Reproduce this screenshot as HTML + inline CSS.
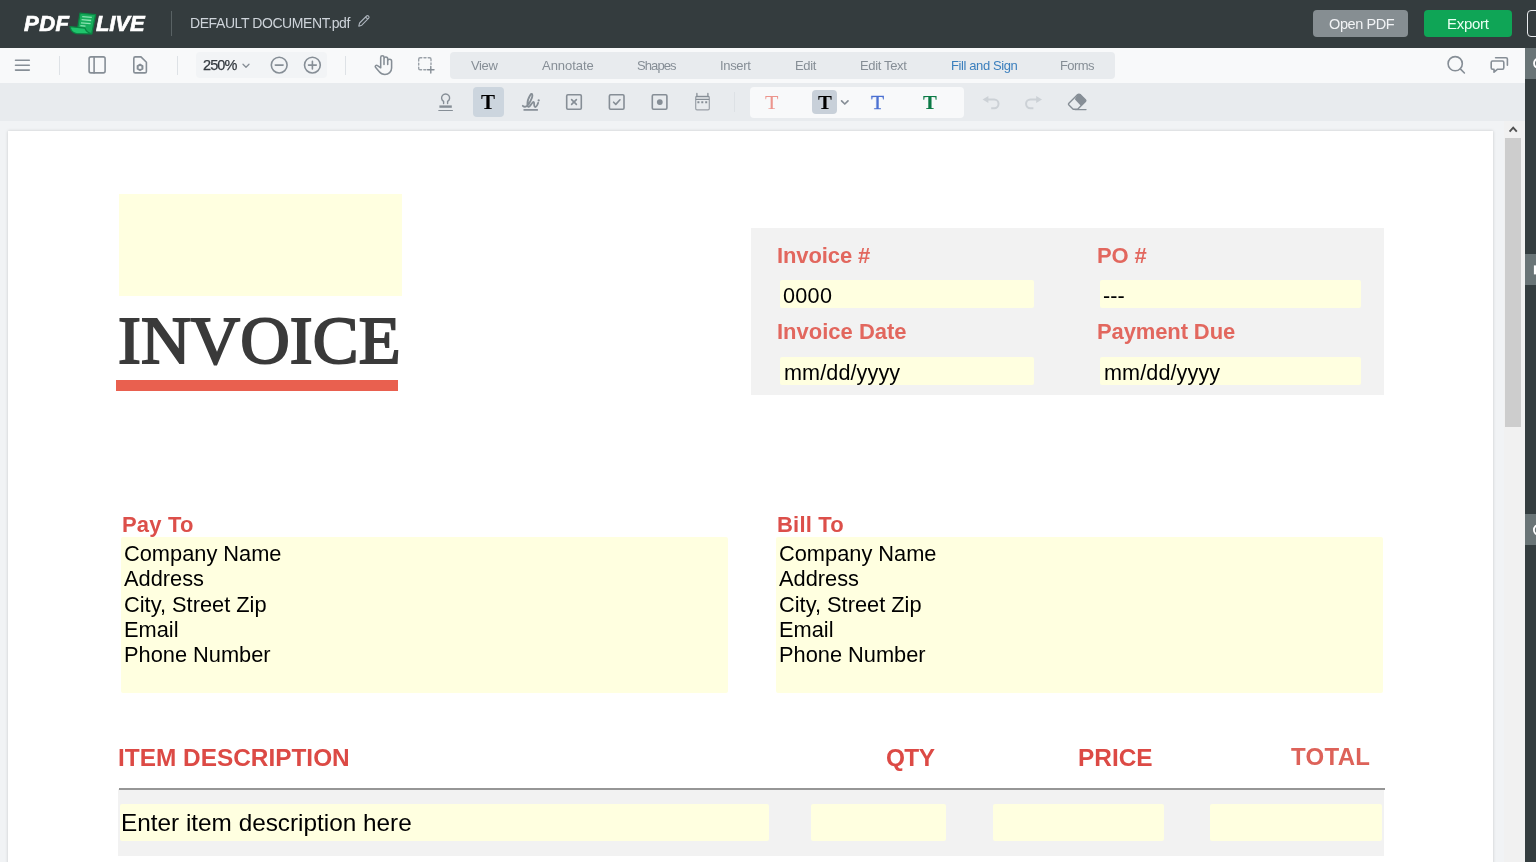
<!DOCTYPE html>
<html lang="en">
<head>
<meta charset="utf-8">
<title>PDF Live - DEFAULT DOCUMENT.pdf</title>
<style>
*{box-sizing:border-box;margin:0;padding:0}
html,body{width:1536px;height:862px;overflow:hidden;background:#f1f3f5;font-family:"Liberation Sans",sans-serif}
.abs,.t{position:absolute}
.t{white-space:nowrap;line-height:1;will-change:transform}
.ct{display:inline-block;transform-origin:0 80%}
#app{position:relative;width:1536px;height:862px;overflow:hidden}
/* header */
#hdr{left:0;top:0;width:1536px;height:48px;background:#343c3e}
#tb1{left:0;top:48px;width:1525px;height:35px;background:#f8f9fa}
#tb2{left:0;top:83px;width:1525px;height:38px;background:#e8ebee}
#side{left:1525px;top:48px;width:11px;height:814px;background:#343d3f}
.band{left:1525px;width:11px;background:#697476}
.sep{width:1px;background:#dee2e6}
svg{position:absolute;overflow:visible}
.ic{fill:none;stroke:#868e96;stroke-width:1.6;stroke-linecap:round;stroke-linejoin:round}
.tab{color:#868e96;font-size:13px;top:58.5px;letter-spacing:-0.35px}
/* document */
#page{left:8px;top:131px;width:1485px;height:740px;background:#fff;box-shadow:0 0 3px rgba(0,0,0,.17)}
.fld{background:#ffffe0;border-radius:2px}
.lbl{color:#e2574c;font-weight:bold}
.val{color:#000}
</style>
</head>
<body>
<div id="app">
<!-- SECTION:header -->
<div id="hdr" class="abs">
  <span class="t" id="lg1" style="left:24px;top:12.5px;font-size:22px;font-weight:bold;font-style:italic;color:#fff;letter-spacing:0.5px;-webkit-text-stroke:0.7px #fff">PDF</span>
  <svg id="lgi" style="left:68px;top:12px" width="30" height="24" viewBox="0 0 30 24">
    <path d="M12 1.2 L27.6 2.6 L23.8 21.6 L9 20.5 Z" fill="#17ad5c" stroke="#0b8443" stroke-width="1.3" stroke-linejoin="round"/>
    <path d="M14.2 4.6 L23.8 5.4 M13.6 7.7 L23.2 8.5 M13 10.8 L22.6 11.6 M12.4 13.7 L17.5 14.1" stroke="#8be3b1" stroke-width="1.3" fill="none"/>
    <path d="M2 14.6 L17 16.2 Q18.5 20.5 23.8 21.8 L8.5 21.6 Q3 20.6 2 14.6 Z" fill="#1fc46c" stroke="#0b8443" stroke-width="1.2" stroke-linejoin="round"/>
  </svg>
  <span class="t" id="lg2" style="left:96px;top:12.5px;font-size:22px;font-weight:bold;font-style:italic;color:#fff;letter-spacing:-0.1px;-webkit-text-stroke:0.7px #fff">LIVE</span>
  <div class="abs" style="left:171px;top:11px;width:1px;height:25px;background:#596264"></div>
  <span class="t" id="ttl" style="left:190px;top:16px;font-size:14px;color:#ced4da;letter-spacing:-0.42px">DEFAULT DOCUMENT.pdf</span>
  <svg id="pen" style="left:357px;top:14px" width="14" height="14" viewBox="0 0 14 14">
    <path d="M1.8 12.2 L2.6 9 L9.6 2 Q10.6 1.2 11.6 2.2 Q12.6 3.2 11.7 4.2 L4.8 11.2 Z M8.6 3.1 L10.7 5.2" fill="none" stroke="#adb5bd" stroke-width="1.1" stroke-linejoin="round"/>
  </svg>
  <div class="abs" style="left:1313px;top:10px;width:95px;height:27px;border-radius:4px;background:#868e92"></div>
  <span class="t" id="bopen" style="left:1328.7px;top:16.8px;font-size:14.5px;color:#f1f3f5;letter-spacing:-0.4px">Open PDF</span>
  <div class="abs" style="left:1424px;top:10px;width:88px;height:27px;border-radius:4px;background:#0fa556"></div>
  <span class="t" id="bexp" style="left:1447px;top:16px;font-size:15px;color:#eafff2;letter-spacing:-0.3px">Export</span>
  <div class="abs" style="left:1527px;top:10px;width:20px;height:27px;border-radius:4px;border:1px solid #e9ecef"></div>
</div>
<!-- SECTION:toolbar1 -->
<div id="tb1" class="abs"></div>
<div class="abs" style="left:196px;top:52px;width:131px;height:26px;border-radius:4px;background:#f2f4f6"></div>
<svg id="tb1ic" style="left:0;top:0" width="1536" height="90" viewBox="0 0 1536 90">
  <g class="ic">
    <path d="M15.5 60.3 H29.3 M15.5 65.2 H29.3 M15.5 70.1 H29.3"/>
    <rect x="89.1" y="56.9" width="16" height="16" rx="1.8"/><path d="M94.1 57 V73"/>
    <path d="M135.3 56.9 H141 L146.4 62.3 V71.4 Q146.4 72.9 144.9 72.9 H135.3 Q133.8 72.9 133.8 71.4 V58.4 Q133.8 56.9 135.3 56.9 Z"/>
    <path d="M140.05 64.65 L142.43 66.03 L142.43 68.78 L140.05 70.15 L137.67 68.78 L137.67 66.03 Z" stroke-width="2" stroke-linejoin="miter"/>
    <circle cx="279.2" cy="65.1" r="7.9"/><path d="M275.3 65.1 H283.1"/>
    <circle cx="312.4" cy="65.1" r="7.9"/><path d="M308.5 65.1 H316.3 M312.4 61.2 V69"/>
    <path d="M243 64.3 L246 67.3 L249 64.3" stroke-width="1.3"/>
    <path d="M380.7 67.8 V57.4 a1.65 1.65 0 0 1 3.3 0 V64.4 M384 58.9 a1.85 1.85 0 0 1 3.7 0 V64.4 M387.7 61.2 a1.95 1.95 0 0 1 3.9 0 V68 c0 3.9 -3 6.4 -6.7 6.4 c-2.6 0 -4.3 -1 -5.6 -2.7 l-3.8 -4.4 c-0.9 -1.3 0.8 -2.6 2 -1.6 l3.2 2.1" stroke-width="1.55"/>
    <path d="M418.7 61 V59.2 Q418.7 57.8 420.1 57.8 H421.8 M424 57.8 H426 M428.2 57.8 H429.6 Q431 57.8 431 59.2 V60.8 M431 63 V64.6 M418.7 63.2 V65 M418.7 67.3 V68.4 Q418.7 69.7 420.1 69.7 H421.6 M423.8 69.7 H425.8" stroke-width="1.4" stroke="#9aa1a8"/>
    <path d="M427.5 69.7 H434 M430.8 66.5 V73" stroke-width="1.4"/>
    <circle cx="1455.2" cy="63.7" r="7.1" stroke-width="1.6"/><path d="M1460.3 68.9 L1464.4 73" stroke-width="1.6"/>
    <path d="M1492.6 61 H1502.4 Q1503.8 61 1503.8 62.4 V67.8 Q1503.8 69.2 1502.4 69.2 H1497.6 L1494 72.2 V69.2 H1492.6 Q1491.2 69.2 1491.2 67.8 V62.4 Q1491.2 61 1492.6 61 Z"/>
    <path d="M1495.6 57.7 H1506 Q1507.4 57.7 1507.4 59.1 V65.2"/>
  </g>
</svg>
<div class="abs sep" style="left:59.2px;top:56px;height:19px"></div>
<div class="abs sep" style="left:177px;top:56px;height:19px"></div>
<div class="abs sep" style="left:344.8px;top:56px;height:19px"></div>
<span class="t" id="zoomv" style="left:203px;top:58px;font-size:14.5px;color:#343a40;letter-spacing:-0.9px;-webkit-text-stroke:0.25px #343a40">250%</span>
<div class="abs" id="tabs" style="left:450px;top:52px;width:664.5px;height:27px;border-radius:4px;background:#e8ebee"></div>
<span class="t tab" id="tab1" style="left:471px">View</span>
<span class="t tab" id="tab2" style="left:542px;letter-spacing:-0.03px">Annotate</span>
<span class="t tab" id="tab3" style="left:636.5px;letter-spacing:-0.9px">Shapes</span>
<span class="t tab" id="tab4" style="left:719.5px">Insert</span>
<span class="t tab" id="tab5" style="left:794.5px">Edit</span>
<span class="t tab" id="tab6" style="left:860px">Edit Text</span>
<span class="t tab" id="tab7" style="left:950.5px;letter-spacing:-0.4px;color:#3b7fbd">Fill and Sign</span>
<span class="t tab" id="tab8" style="left:1059.5px;letter-spacing:-0.6px">Forms</span>
<!-- SECTION:toolbar2 -->
<div id="tb2" class="abs"></div>
<div class="abs" id="tsel" style="left:473px;top:87px;width:30.5px;height:30px;border-radius:4px;background:#ccd5de"></div>
<div class="abs" id="cgrp" style="left:750px;top:87px;width:213.5px;height:30.5px;border-radius:4px;background:#f8f9fa"></div>
<div class="abs" id="csel" style="left:812.3px;top:89.7px;width:24.9px;height:24.5px;border-radius:4px;background:#c8d0d9"></div>
<div class="abs sep" style="left:733.5px;top:92px;height:20px;background:#dde1e5"></div>
<span class="t" id="T0" style="left:481.2px;top:92px;font-family:'Liberation Serif',serif;font-weight:bold;font-size:21px;color:#000">T</span>
<span class="t ct" id="T1" style="left:765.3px;top:91.6px;transform:scale(1.1,.92);font-family:'Liberation Serif',serif;font-size:20px;color:#ec958d">T</span>
<span class="t ct" id="T2" style="left:817.8px;top:91.6px;transform:scale(1.04,.92);font-family:'Liberation Serif',serif;font-weight:bold;font-size:20px;color:#000">T</span>
<span class="t ct" id="T3" style="left:870.6px;top:91.6px;transform:scale(1.08,.92);font-family:'Liberation Serif',serif;font-size:20px;color:#4a6fd1;-webkit-text-stroke:0.3px #4a6fd1">T</span>
<span class="t ct" id="T4" style="left:922.8px;top:91.6px;transform:scale(1.04,.92);font-family:'Liberation Serif',serif;font-weight:bold;font-size:20px;color:#0b7a45">T</span>
<svg id="tb2ic" style="left:0;top:0" width="1536" height="125" viewBox="0 0 1536 125">
  <g class="ic">
    <!-- stamp -->
    <path d="M443.6 103.6 V101.4 A4 4 0 1 1 447.6 101.4 V103.6" stroke-width="1.4"/>
    <path d="M439.4 106.6 H451.8" stroke-width="2.4" stroke-linecap="butt"/>
    <path d="M438.8 110.5 H452.4" stroke-width="1.2"/>
    <!-- signature -->
    <path d="M522.8 105.8 C524.6 107.5 527 106.8 528.6 104.2 C530.6 101 532.5 97 532.4 95.2 C532.3 93.7 531.2 93.6 530.3 94.9 C528.4 97.8 527.2 102.2 527.4 105 C527.5 106.9 528.5 107.4 529.6 106.4 C530.9 105.2 531.8 103.2 532.8 102.3 C533.6 101.6 534.1 102.2 534.1 103.5 C534.1 105.2 534.1 107 535.3 107 C536.6 107 537.5 104.8 538.2 102.8" stroke-width="1.8"/>
    <circle cx="538.7" cy="100.4" r="1.1" fill="#868e96" stroke="none"/>
    <path d="M523.5 109.9 H537.9" stroke-width="1.7" stroke-linecap="butt"/>
    <!-- x box -->
    <rect x="566.7" y="94.8" width="14.6" height="14.4" rx="1.2"/><path d="M571.6 99.6 L576.4 104.4 M576.4 99.6 L571.6 104.4" stroke-width="1.6"/>
    <!-- check box -->
    <rect x="609.4" y="94.8" width="14.6" height="14.4" rx="1.2"/><path d="M613.6 102.2 L615.8 104.4 L620 99.8" stroke-width="1.6"/>
    <!-- radio box -->
    <rect x="652.3" y="94.8" width="14.6" height="14.4" rx="1.2"/><circle cx="659.8" cy="102.1" r="2.9" fill="#868e96" stroke="none"/>
    <!-- calendar -->
    <rect x="695.7" y="96.3" width="13.6" height="13.5" rx="1.3" stroke-width="1.2" stroke="#9aa0a7"/>
    <path d="M695.8 96.6 H709.2 M695.8 99.4 H709.2" stroke-width="1.4" stroke-linecap="butt"/>
    <path d="M696.9 93.5 V96.4 M707.9 93.5 V96.4" stroke-width="1.3"/>
    <path d="M697.4 102.3 H699.4 M701.3 102.3 H703.3 M705.2 102.3 H707.2" stroke-width="1.9" stroke-linecap="butt"/>
    <!-- color chevron -->
    <path d="M841.6 100.8 L844.8 104 L848 100.8" stroke-width="1.7"/>
    <!-- undo -->
    <path d="M987.6 99.5 H994.2 A4.35 4.35 0 0 1 994.2 108.2 H991.2" stroke="#ccd1d6" stroke-width="2" stroke-linecap="butt"/><path d="M982.6 99.5 L988.4 95.9 V103.1 Z" fill="#ccd1d6" stroke="none"/>
    <!-- redo -->
    <path d="M1037 99.5 H1030.4 A4.35 4.35 0 0 0 1030.4 108.2 H1033.4" stroke="#ccd1d6" stroke-width="2" stroke-linecap="butt"/><path d="M1042 99.5 L1036.2 95.9 V103.1 Z" fill="#ccd1d6" stroke="none"/>
    <!-- eraser -->
    <path d="M1077.2 94.9 L1068.9 103.2 Q1068 104.1 1068.9 105 L1073.2 109.3 H1077.6 L1085.4 101.5 Q1086.3 100.6 1085.4 99.7 L1080.6 94.9 Q1079 93.6 1077.2 94.9 Z" stroke-width="1.4"/>
    
    <path d="M1077.2 95 L1078.6 94.2 L1080.4 94.6 L1085.9 100.4 L1085.4 101.6 L1081 106 L1074.8 99.2 Z" fill="#868e96" stroke="none"/>
    <path d="M1075 109.6 H1086" stroke-width="1.4"/>
  </g>
</svg>
<!-- SECTION:document -->
<div id="page" class="abs"></div>
<div class="abs fld" style="left:118.5px;top:194.2px;width:283.7px;height:101.8px;border-radius:0"></div>
<span class="t" id="inv" style="left:117.7px;top:305.5px;font-family:'Liberation Serif',serif;font-size:68.6px;color:#3a3a3a;letter-spacing:0.1px;-webkit-text-stroke:2px #3a3a3a">INVOICE</span>
<div class="abs" style="left:116px;top:379.5px;width:282px;height:11.5px;background:#e9604f"></div>
<div class="abs" style="left:751px;top:227.7px;width:633px;height:167.3px;background:#f2f2f2"></div>
<span class="t lbl" id="l1" style="left:776.5px;top:245.3px;font-size:22px;color:#e2675e;letter-spacing:-0.1px">Invoice #</span>
<span class="t lbl" id="l2" style="left:1096.5px;top:245.3px;font-size:22px;color:#e2675e;letter-spacing:-0.1px">PO #</span>
<span class="t lbl" id="l3" style="left:776.5px;top:321.2px;font-size:22px;color:#e2675e">Invoice Date</span>
<span class="t lbl" id="l4" style="left:1096.5px;top:321.2px;font-size:22px;color:#e2675e;letter-spacing:-0.12px">Payment Due</span>
<div class="abs fld" style="left:780.3px;top:280px;width:254px;height:28px"></div>
<div class="abs fld" style="left:1100.2px;top:280px;width:260.5px;height:28px"></div>
<div class="abs fld" style="left:780.3px;top:357px;width:254px;height:28px"></div>
<div class="abs fld" style="left:1100.2px;top:357px;width:260.5px;height:28px"></div>
<span class="t val" id="v1" style="left:783.4px;top:284.6px;font-size:21.6px;letter-spacing:0.3px">0000</span>
<span class="t val" id="v2" style="left:1103.4px;top:284.6px;font-size:21.6px">---</span>
<span class="t val" id="v3" style="left:784px;top:361.6px;font-size:21.6px;letter-spacing:0.1px">mm/dd/yyyy</span>
<span class="t val" id="v4" style="left:1104px;top:361.6px;font-size:21.6px;letter-spacing:0.1px">mm/dd/yyyy</span>
<span class="t lbl" id="l5" style="left:122px;top:513.8px;font-size:22px;color:#dc4f4a;letter-spacing:0.2px">Pay To</span>
<span class="t lbl" id="l6" style="left:776.5px;top:513.8px;font-size:22px;color:#dc4f4a;letter-spacing:0.2px">Bill To</span>
<div class="abs fld" style="left:121.4px;top:536.8px;width:607px;height:156px"></div>
<div class="abs fld" style="left:775.8px;top:536.8px;width:607px;height:156px"></div>
<div class="t val" id="a1" style="left:124px;top:540.5px;font-size:21.8px;line-height:25.25px">Company Name<br>Address<br>City, Street Zip<br>Email<br>Phone Number</div>
<div class="t val" id="a2" style="left:778.5px;top:540.5px;font-size:21.8px;line-height:25.25px">Company Name<br>Address<br>City, Street Zip<br>Email<br>Phone Number</div>
<span class="t lbl" id="h1" style="left:117.5px;top:746.2px;font-size:24.4px;color:#dc4a45">ITEM DESCRIPTION</span>
<span class="t lbl" id="h2" style="left:886px;letter-spacing:-0.6px;top:746.2px;font-size:24.4px;color:#dc4a45">QTY</span>
<span class="t lbl" id="h3" style="left:1078px;top:746.2px;font-size:24.4px;color:#dc4a45">PRICE</span>
<span class="t lbl" id="h4" style="left:1291px;top:744.6px;font-size:24px;color:#dd6259;letter-spacing:0.3px">TOTAL</span>
<div class="abs" style="left:118px;top:789px;width:1266px;height:66.5px;background:#f2f2f2"></div>
<div class="abs" style="left:118.5px;top:788px;width:1266px;height:1.7px;background:#969696"></div>
<div class="abs fld" style="left:119.5px;top:804.3px;width:649px;height:36.5px"></div>
<div class="abs fld" style="left:811px;top:804.3px;width:135px;height:36.5px"></div>
<div class="abs fld" style="left:992.5px;top:804.3px;width:171.3px;height:36.5px"></div>
<div class="abs fld" style="left:1210.3px;top:804.3px;width:171.7px;height:36.5px"></div>
<span class="t val" id="d1" style="left:120.6px;top:811.1px;font-size:24.33px">Enter item description here</span>
<!-- SECTION:scrollbar -->
<div class="abs" style="left:1504px;top:121px;width:21px;height:741px;background:#f1f1f1"></div>
<div class="abs" style="left:1505px;top:138px;width:16px;height:289px;background:#cdcdcd"></div>
<svg style="left:1504px;top:121px" width="21" height="17" viewBox="0 0 21 17"><path d="M5.6 10.6 L9.2 6.6 L12.8 10.6" fill="none" stroke="#505050" stroke-width="1.9"/></svg>
<!-- SECTION:side -->
<div id="side" class="abs"></div>
<div class="abs band" style="top:48px;height:31px"></div>
<div class="abs band" style="top:254px;height:31px"></div>
<div class="abs band" style="top:514px;height:31px"></div>
<svg style="left:1525px;top:48px" width="11" height="814" viewBox="0 0 11 814">
  <circle cx="14.2" cy="15.3" r="5.2" fill="none" stroke="#fff" stroke-width="1.8"/>
  <rect x="8.9" y="217.4" width="4" height="9" fill="#fff"/>
  <circle cx="14.2" cy="481.9" r="5.3" fill="none" stroke="#fff" stroke-width="1.8"/>
</svg>
</div>
</body>
</html>
